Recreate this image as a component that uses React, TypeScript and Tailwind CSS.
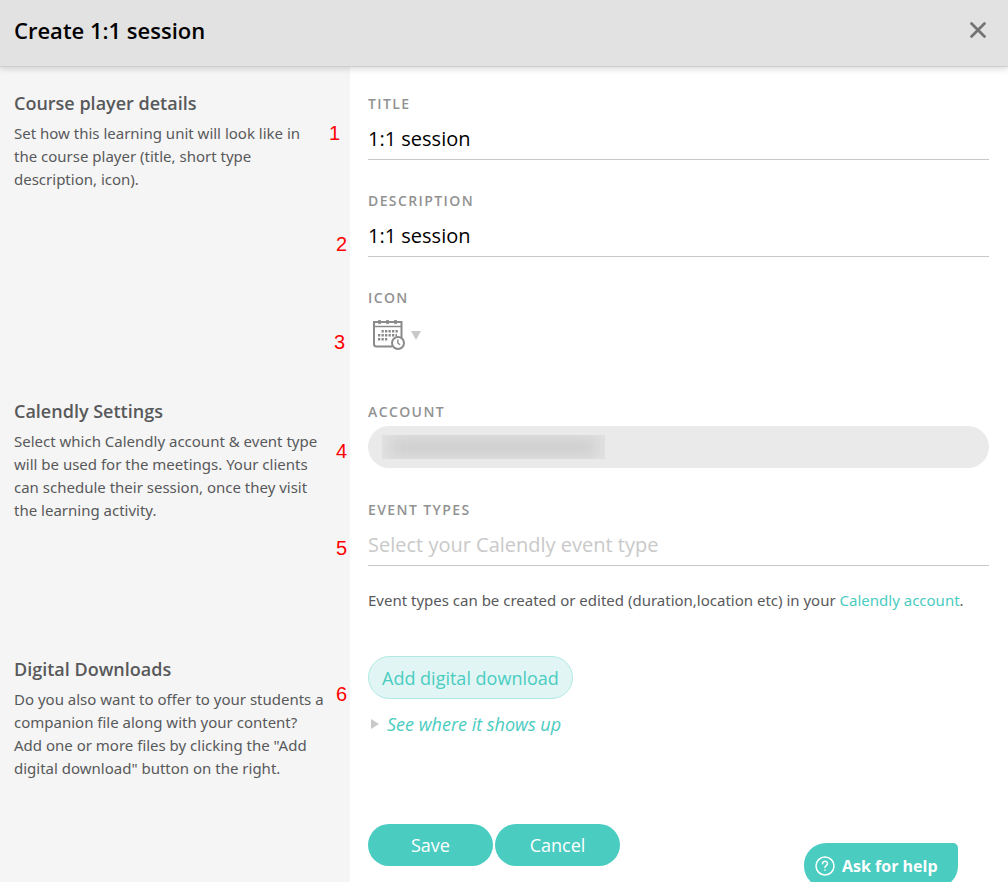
import { useState } from "react";
import type { ReactNode } from "react";

const labelClass =
  "block h-5 text-sm leading-5 font-semibold tracking-widest text-[#929292] uppercase";
const inputClass =
  "block h-[46px] w-full border-b border-[#c8c8c8] bg-transparent pt-1 text-xl text-black outline-none placeholder:text-[#c9c9c9]";
const pillClass =
  "h-[42px] w-[125px] rounded-full bg-[#4accc1] text-lg text-white";

function Marker({ children, className }: { children: ReactNode; className: string }) {
  return (
    <span
      className={`absolute font-['Liberation_Sans',sans-serif] text-xl leading-5 text-[#ff0000] ${className}`}
    >
      {children}
    </span>
  );
}

function Section({
  title,
  text,
  className,
  children,
}: {
  title: string;
  text: string;
  className: string;
  children: ReactNode;
}) {
  return (
    <section className={`grid grid-cols-[350px_1fr] ${className}`}>
      <div className="bg-[#f5f5f5] pt-1 pr-3 pl-3.5">
        <h2 className="text-lg leading-6 font-semibold text-[#58595b]">{title}</h2>
        <p className="mt-[7px] font-['Noto_Sans',sans-serif] text-[15px] leading-[23px] whitespace-pre-line text-[#58595b]">
          {text}
        </p>
      </div>
      <div className="min-w-0 pr-[19px] pl-[18px]">{children}</div>
    </section>
  );
}

function CalendarIcon() {
  return (
    <svg width="34" height="32" viewBox="0 0 34 32" fill="none" stroke="#8a8a8a" aria-hidden="true">
      <path d="M20 27.500H4.500A2.500 2.500 0 0 1 2 25V3h27.500v16" strokeWidth="2" />
      <path d="M2 7.500h27.500" strokeWidth="1.500" />
      <path d="M7.500 1v4M15.500 1v4M23.500 1v4" strokeWidth="2.600" />
      <path d="M9.500 12.300h17M6 16.300h19M6 20.300h10" strokeWidth="2.400" strokeDasharray="2.300 1.200" />
      <circle cx="26" cy="24" r="6" fill="#fff" strokeWidth="2" />
      <path d="M25.800 20.500V24l2.200 1.700" strokeWidth="1.400" />
    </svg>
  );
}

export default function App() {
  const [title, setTitle] = useState("1:1 session");
  const [description, setDescription] = useState("1:1 session");

  return (
    <div className="flex min-h-screen flex-col bg-white font-['Open_Sans','Noto_Sans',sans-serif]">
      <header className="relative z-10 flex h-[67px] items-center justify-between border-b border-[#cfcfcf] bg-[#e2e2e2] pr-[21px] pb-1.5 pl-3.5 shadow-[0_2px_6px_rgba(0,0,0,0.15)]">
        <h1 className="text-[22px] font-semibold text-black">Create 1:1 session</h1>
        <button type="button" aria-label="Close">
          <svg width="18" height="18" viewBox="0 0 18 18" fill="none" stroke="#747474" strokeWidth="2.800" strokeLinecap="round">
            <path d="M2.500 2.500l13 13M15.500 2.500l-13 13" />
          </svg>
        </button>
      </header>

      <main className="flex flex-1 flex-col">
        <div className="grid h-5 grid-cols-[350px_1fr]">
          <div className="bg-[#f5f5f5]" />
        </div>

        <Section
          title="Course player details"
          text={"Set how this learning unit will look like in\nthe course player (title, short type\ndescription, icon)."}
          className=""
        >
          <div className="flex flex-col gap-[31px] pt-[7px] pb-[39px]">
            <div className="relative">
              <label htmlFor="title" className={labelClass}>Title</label>
              <input id="title" className={inputClass} value={title} onChange={(e) => setTitle(e.target.value)} />
              <Marker className="top-[29px] -left-[39px]">1</Marker>
            </div>
            <div className="relative">
              <label htmlFor="description" className={labelClass}>Description</label>
              <input id="description" className={inputClass} value={description} onChange={(e) => setDescription(e.target.value)} />
              <Marker className="top-[43px] -left-8">2</Marker>
            </div>
            <div className="relative">
              <span id="icon-label" className={labelClass}>Icon</span>
              <button type="button" aria-labelledby="icon-label" className="mt-1.5 flex h-[42px] items-center gap-[5px] pl-1">
                <CalendarIcon />
                <svg width="10" height="9" viewBox="0 0 10 9" fill="#c9c9c9" aria-hidden="true">
                  <path d="M0 0h10L5 9z" />
                </svg>
              </button>
              <Marker className="top-11 -left-[34px]">3</Marker>
            </div>
          </div>
        </Section>

        <Section
          title="Calendly Settings"
          text={"Select which Calendly account & event type\nwill be used for the meetings. Your clients\ncan schedule their session, once they visit\nthe learning activity."}
          className=""
        >
          <div className="pt-[7px] pb-[41px]">
            <div className="relative">
              <span className={labelClass}>Account</span>
              <div className="mt-1 flex h-[42px] items-center rounded-full bg-[#eaeaea] px-3.5">
                <div className="flex h-6 w-[223px] items-center overflow-hidden bg-[#e2e2e2]">
                  <div className="mx-2 h-4 flex-1 bg-[#cbcbcb] blur-[8px]" />
                </div>
              </div>
              <Marker className="top-[39px] -left-8">4</Marker>
            </div>
            <div className="relative mt-8">
              <label htmlFor="event" className={labelClass}>Event types</label>
              <input id="event" className={inputClass} placeholder="Select your Calendly event type" />
              <Marker className="top-[38px] -left-8">5</Marker>
            </div>
            <p className="mt-[23px] font-['Noto_Sans',sans-serif] text-[15px] leading-[23px] text-[#58595b]">
              Event types can be created or edited (duration,location etc) in your{" "}
              <a href="#calendly" className="text-[#4accc1]">Calendly account</a>.
            </p>
          </div>
        </Section>

        <Section
          title="Digital Downloads"
          text={'Do you also want to offer to your students a\ncompanion file along with your content?\nAdd one or more files by clicking the "Add\ndigital download" button on the right.'}
          className="flex-1"
        >
          <div className="pt-[3px] pb-4">
            <div className="relative">
              <button type="button" className="h-[43px] rounded-full border border-[#aee8e2] bg-[#e1f6f4] px-[13px] text-lg text-[#4accc1]">
                Add digital download
              </button>
              <Marker className="top-7 -left-8">6</Marker>
            </div>
            <button type="button" className="mt-[13px] flex h-6 items-center gap-2 pl-[3px] text-lg text-[#4accc1] italic">
              <svg width="8" height="10" viewBox="0 0 8 10" fill="#c9c9c9" aria-hidden="true">
                <path d="M0 0v10l8-5z" />
              </svg>
              See where it shows up
            </button>
            <div className="mt-[88px] flex gap-0.5">
              <button type="button" className={pillClass}>Save</button>
              <button type="button" className={pillClass}>Cancel</button>
            </div>
          </div>
        </Section>
      </main>

      <button
        type="button"
        className="fixed right-[50px] -bottom-1.5 flex h-[45px] w-[154px] items-center gap-[7px] rounded-l-[22px] rounded-tr-[5px] rounded-br-[22px] bg-[#4accc1] pl-[11px] text-base font-bold whitespace-nowrap text-white"
      >
        <svg width="20" height="20" viewBox="0 0 20 20" fill="none" stroke="#fff" strokeWidth="1.500" strokeLinecap="round" aria-hidden="true">
          <circle cx="10" cy="10" r="9" />
          <path d="M7.500 7.800c0-3.400 5.200-3.200 5 0-.1 1.700-2.500 1.900-2.500 3.600M10 14v.2" />
        </svg>
        Ask for help
      </button>
    </div>
  );
}
